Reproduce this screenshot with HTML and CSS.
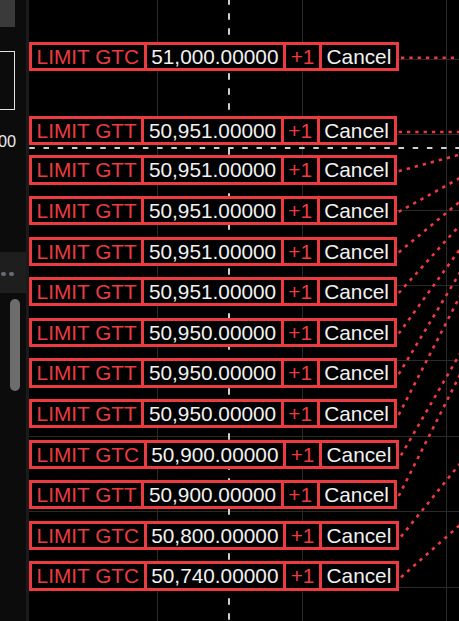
FILE: index.html
```html
<!DOCTYPE html>
<html>
<head>
<meta charset="utf-8">
<link rel="stylesheet" href="styles.css">
</head>
<body>
<div class="app">
  <aside class="side">
    <div class="side-top"></div>
    <div class="side-box"></div>
    <div class="side-value"><span>00</span></div>
    <div class="side-handle"><span class="dot"></span><span class="dot"></span></div>
    <div class="side-scroll"></div>
  </aside>
  <div class="divider"></div>
  <main class="chart">
    <svg class="layer" width="459" height="621" viewBox="0 0 459 621">
      <g class="grid">
        <line x1="157.5" y1="0" x2="157.5" y2="621"/>
        <line x1="302.5" y1="0" x2="302.5" y2="621"/>
        <line x1="446.5" y1="0" x2="446.5" y2="621"/>
        <line x1="29" y1="59.5" x2="459" y2="59.5"/>
        <line x1="29" y1="134.5" x2="459" y2="134.5"/>
        <line x1="29" y1="210.5" x2="459" y2="210.5"/>
        <line x1="29" y1="285.5" x2="459" y2="285.5"/>
        <line x1="29" y1="360.5" x2="459" y2="360.5"/>
        <line x1="29" y1="436.5" x2="459" y2="436.5"/>
        <line x1="29" y1="511.5" x2="459" y2="511.5"/>
        <line x1="29" y1="587.5" x2="459" y2="587.5"/>
      </g>
      <g class="cross">
        <line class="cross-v" x1="229" y1="0" x2="229" y2="621"/>
        <line class="cross-h" x1="29.3" y1="148" x2="459" y2="148"/>
      </g>
      <g class="links">
        <line x1="401" y1="57.7" x2="459" y2="57.7"/>
        <line x1="398.7" y1="132" x2="459" y2="132"/>
        <line x1="398.7" y1="171.2" x2="544" y2="131.7"/>
        <line x1="398.7" y1="211.8" x2="544" y2="131.7"/>
        <line x1="398.7" y1="252.4" x2="544" y2="131.7"/>
        <line x1="398.7" y1="293" x2="544" y2="131.7"/>
        <line x1="398.7" y1="333.6" x2="544" y2="133.2"/>
        <line x1="398.7" y1="374.2" x2="544" y2="133.2"/>
        <line x1="398.7" y1="414.8" x2="544" y2="133.2"/>
        <line x1="401" y1="455.4" x2="544" y2="208.7"/>
        <line x1="398.7" y1="496" x2="544" y2="208.7"/>
        <line x1="401" y1="536.6" x2="544" y2="359.7"/>
        <line x1="401" y1="577.2" x2="544" y2="450.3"/>
      </g>
    </svg>
    <div class="orders">
      <div class="order gap-wide"><span class="cell type">LIMIT GTC</span><span class="cell price">51,000.00000</span><span class="cell qty">+1</span><span class="cell cancel">Cancel</span></div>
      <div class="order gap-tight"><span class="cell type">LIMIT GTT</span><span class="cell price">50,951.00000</span><span class="cell qty">+1</span><span class="cell cancel">Cancel</span></div>
      <div class="order"><span class="cell type">LIMIT GTT</span><span class="cell price">50,951.00000</span><span class="cell qty">+1</span><span class="cell cancel">Cancel</span></div>
      <div class="order"><span class="cell type">LIMIT GTT</span><span class="cell price">50,951.00000</span><span class="cell qty">+1</span><span class="cell cancel">Cancel</span></div>
      <div class="order"><span class="cell type">LIMIT GTT</span><span class="cell price">50,951.00000</span><span class="cell qty">+1</span><span class="cell cancel">Cancel</span></div>
      <div class="order"><span class="cell type">LIMIT GTT</span><span class="cell price">50,951.00000</span><span class="cell qty">+1</span><span class="cell cancel">Cancel</span></div>
      <div class="order"><span class="cell type">LIMIT GTT</span><span class="cell price">50,950.00000</span><span class="cell qty">+1</span><span class="cell cancel">Cancel</span></div>
      <div class="order"><span class="cell type">LIMIT GTT</span><span class="cell price">50,950.00000</span><span class="cell qty">+1</span><span class="cell cancel">Cancel</span></div>
      <div class="order"><span class="cell type">LIMIT GTT</span><span class="cell price">50,950.00000</span><span class="cell qty">+1</span><span class="cell cancel">Cancel</span></div>
      <div class="order"><span class="cell type">LIMIT GTC</span><span class="cell price">50,900.00000</span><span class="cell qty">+1</span><span class="cell cancel">Cancel</span></div>
      <div class="order"><span class="cell type">LIMIT GTT</span><span class="cell price">50,900.00000</span><span class="cell qty">+1</span><span class="cell cancel">Cancel</span></div>
      <div class="order"><span class="cell type">LIMIT GTC</span><span class="cell price">50,800.00000</span><span class="cell qty">+1</span><span class="cell cancel">Cancel</span></div>
      <div class="order"><span class="cell type">LIMIT GTC</span><span class="cell price">50,740.00000</span><span class="cell qty">+1</span><span class="cell cancel">Cancel</span></div>
    </div>
  </main>
</div>
</body>
</html>
```
FILE: styles.css
```css
html, body {
  margin: 0;
  padding: 0;
  background: #000;
  overflow: hidden;
}
.app {
  display: flex;
  width: 459px;
  height: 621px;
  font-family: "Liberation Sans", Arial, sans-serif;
}
.side {
  width: 26px;
  flex: none;
  background: #0c0c0c;
  display: flex;
  flex-direction: column;
  overflow: hidden;
}
.side-top {
  width: 15px;
  height: 27px;
  background: #3a3a3a;
}
.side-box {
  width: 14px;
  height: 57px;
  margin-top: 24px;
  border: 1px solid #e2e2e2;
  border-left: none;
}
.side-value {
  display: flex;
  justify-content: flex-end;
  width: 16px;
  margin-top: 21.5px;
  font-size: 16.3px;
  line-height: 19px;
  color: #ececec;
  white-space: nowrap;
}
.side-handle {
  height: 41.6px;
  margin-top: 101.2px;
  background: #1e1e1e;
  display: flex;
  align-items: center;
  gap: 3.4px;
  padding: 3px 0 0 1px;
  box-sizing: border-box;
}
.dot {
  width: 4.6px;
  height: 4.6px;
  border-radius: 50%;
  background: #666a71;
}
.side-scroll {
  width: 10px;
  height: 91.4px;
  margin: 6px 0 0 10px;
  border-radius: 5px;
  background: #6d6d6d;
}
.divider {
  width: 3px;
  flex: none;
  background: #1b1b1b;
}
.chart {
  flex: 1;
  position: relative;
  overflow: hidden;
  background: #000;
}
.layer {
  position: absolute;
  left: -29px;
  top: 0;
}
.grid line {
  stroke: #2a2a2a;
  stroke-width: 1;
}
.cross line {
  stroke: #cfcfcf;
  stroke-width: 2;
}
.cross-v {
  stroke-dasharray: 6.5 8.5;
  stroke-dashoffset: 1.7;
}
.cross-h {
  stroke-dasharray: 5.5 8.7;
}
.links line {
  stroke: #eb3b40;
  stroke-width: 2.6;
  stroke-dasharray: 3.3 5;
}
.orders {
  position: relative;
  display: flex;
  flex-direction: column;
  align-items: flex-start;
  padding-top: 41.7px;
}
.order {
  display: flex;
  height: 29.3px;
  box-sizing: border-box;
  border: 3px solid #eb3b40;
  background: #000;
  margin-bottom: 11.3px;
}
.order.gap-wide {
  margin-bottom: 44.7px;
}
.order.gap-tight {
  margin-bottom: 10.4px;
}
.cell {
  padding: 0 4.6px;
  font-size: 20.8px;
  line-height: 23.3px;
  white-space: nowrap;
}
.cell + .cell {
  border-left: 3px solid #eb3b40;
}
.type, .qty {
  color: #eb3b40;
}
.price, .cancel {
  color: #f2f2f2;
}
```
